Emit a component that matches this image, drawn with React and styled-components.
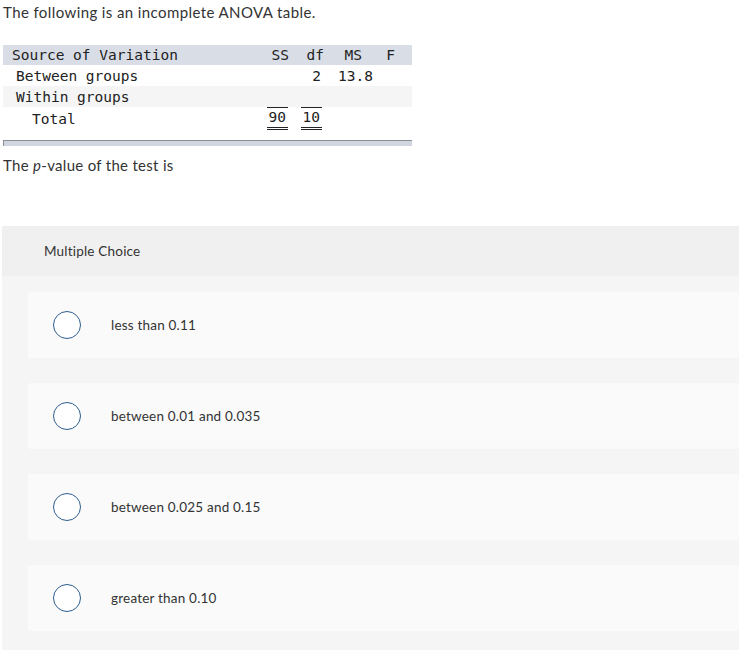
import React from 'react';
import styled, { createGlobalStyle } from 'styled-components';

const GlobalStyle = createGlobalStyle`
  body {
    margin: 0;
    background: #fff;
    font-family: Lato, "Open Sans", sans-serif;
    color: #333;
  }
`;

const Page = styled.div`
  width: 739px;
  padding-top: 2px;
  padding-left: 2px;
  box-sizing: border-box;
`;

const Prompt = styled.p`
  margin: 0 0 0 1px;
  font-size: 15px;
  line-height: 20px;
  letter-spacing: 0.4px;
  color: #333;
`;

const TableWrap = styled.div`
  width: 409px;
  margin: 23px 0 0 1px;
`;

const Table = styled.table`
  width: 409px;
  border-collapse: collapse;
  table-layout: fixed;
  font-family: "DejaVu Sans Mono", "Liberation Mono", monospace;
  font-size: 14.5px;
  color: #222;
`;

const HeadRow = styled.tr`
  background: #d9dde6;
  height: 20px;
`;

const Row = styled.tr`
  background: ${p => (p.$shade ? '#f5f5f5' : '#fff')};
  height: ${p => p.$h || 21}px;
`;

const Cell = styled.td`
  padding: 0 ${p => p.$pr || 0}px 0 ${p => p.$pl || 0}px;
  text-align: ${p => p.$align || 'right'};
  white-space: pre;
  line-height: 20px;
  vertical-align: middle;
`;

const Ruled = styled.span`
  display: inline-block;
  padding: 1px 2px 1px 2px;
  border-top: 1.5px solid #222;
  border-bottom: 3px double #222;
  line-height: 17px;
`;

const ScrollBar = styled.div`
  height: 5px;
  margin-top: 10px;
  background: #d0d5e0;
  border-top: 1px solid #8a8d93;
  border-left: 1px solid #8a8d93;
`;

const Question = styled.p`
  margin: 9px 0 0 1px;
  font-size: 15px;
  line-height: 20px;
  letter-spacing: 0.3px;
  color: #333;
`;

const Choices = styled.section`
  margin-top: 51px;
  background: #f5f5f5;
  padding-bottom: 20px;
`;

const ChoicesHead = styled.div`
  height: 50px;
  background: #f0f0f0;
  display: flex;
  align-items: center;
  padding-left: 42px;
  font-size: 13.5px;
  letter-spacing: 0.2px;
  color: #333;
`;

const OptionList = styled.div`
  display: flex;
  flex-direction: column;
  gap: 25px;
  padding: 16px 0 0 26px;
`;

const Option = styled.label`
  height: 66px;
  display: flex;
  align-items: center;
  background: #fafafa;
  border-radius: 3px;
  padding-left: 25px;
  cursor: pointer;
`;

const Radio = styled.span`
  width: 26px;
  height: 26px;
  border-radius: 50%;
  border: 1.5px solid #2d5e8e;
  background: #fff;
  flex-shrink: 0;
`;

const OptionText = styled.span`
  margin-left: 30px;
  font-size: 13.5px;
  letter-spacing: 0.2px;
  color: #333;
`;

const options = [
  'less than 0.11',
  'between 0.01 and 0.035',
  'between 0.025 and 0.15',
  'greater than 0.10',
];

export default function App() {
  return (
    <>
      <GlobalStyle />
      <Page>
        <Prompt>The following is an incomplete ANOVA table.</Prompt>
        <TableWrap>
          <Table>
            <colgroup>
              <col style={{ width: 252 }} />
              <col style={{ width: 37 }} />
              <col style={{ width: 35 }} />
              <col style={{ width: 51 }} />
              <col style={{ width: 34 }} />
            </colgroup>
            <tbody>
              <HeadRow>
                <Cell $align="left" $pl={9}>Source of Variation</Cell>
                <Cell $pr={3}>SS</Cell>
                <Cell $pr={3}>df</Cell>
                <Cell $pr={16}>MS</Cell>
                <Cell $pr={17}>F</Cell>
              </HeadRow>
              <Row>
                <Cell $align="left" $pl={13}>Between groups</Cell>
                <Cell />
                <Cell $pr={6}>2</Cell>
                <Cell $pr={5}>13.8</Cell>
                <Cell />
              </Row>
              <Row $shade>
                <Cell $align="left" $pl={13}>Within groups</Cell>
                <Cell />
                <Cell />
                <Cell />
                <Cell />
              </Row>
              <Row $h={23}>
                <Cell $align="left" $pl={29}>Total</Cell>
                <Cell $pr={4}><Ruled>90</Ruled></Cell>
                <Cell $pr={5}><Ruled>10</Ruled></Cell>
                <Cell />
                <Cell />
              </Row>
            </tbody>
          </Table>
          <ScrollBar />
        </TableWrap>
        <Question>
          The <i>p</i>-value of the test is
        </Question>
        <Choices>
          <ChoicesHead>Multiple Choice</ChoicesHead>
          <OptionList>
            {options.map(o => (
              <Option key={o}>
                <Radio />
                <OptionText>{o}</OptionText>
              </Option>
            ))}
          </OptionList>
        </Choices>
      </Page>
    </>
  );
}
